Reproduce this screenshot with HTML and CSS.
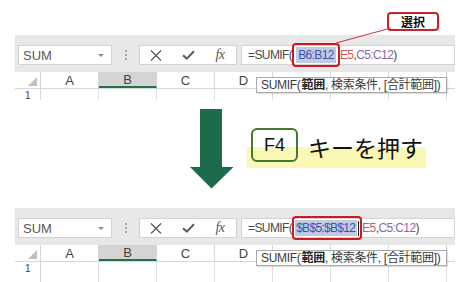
FILE: index.html
```html
<!DOCTYPE html>
<html lang="ja">
<head>
<meta charset="utf-8">
<link rel="stylesheet" href="styles.css">
</head>
<body>
<div class="page">
  <section class="sheet sheet-top">
    <div class="toolbar">
      <div class="namebox"><span>SUM</span><i class="dd"></i></div>
      <div class="grip"><i></i><i></i><i></i></div>
      <div class="btns">
        <span class="btn"><svg width="12" height="11" viewBox="0 0 12 11"><path d="M1 0.5L11 10.5M11 0.5L1 10.5" stroke="#5a5a5a" stroke-width="1.3" fill="none"/></svg></span>
        <span class="btn"><svg width="13" height="10" viewBox="0 0 13 10"><path d="M1 5.2L4.8 8.6L12 1.2" stroke="#5a5a5a" stroke-width="2" fill="none"/></svg></span>
        <span class="btn fx">fx</span>
      </div>
      <div class="formula">=SUMIF(<span class="sel"><span class="hl">B6:B12</span></span><span class="ref-e">E5</span>,<span class="ref-c">C5:C12</span>)</div>
    </div>
    <div class="headers">
      <div class="corner"><i></i></div>
      <div class="col">A</div><div class="col active">B</div><div class="col">C</div><div class="col">D</div><div class="col"></div><div class="col"></div><div class="col"></div><div class="col"></div>
    </div>
    <div class="row">
      <div class="rh">1</div><div class="cell"></div><div class="cell"></div><div class="cell"></div><div class="cell"></div><div class="cell"></div><div class="cell"></div><div class="cell"></div><div class="cell"></div>
    </div>
    <div class="tip">SUMIF(<b>範囲</b>, 検索条件, [合計範囲])</div>
  </section>

  <div class="callout">選択</div>
  <svg class="leader" width="474" height="60" viewBox="0 0 474 60"><line x1="336" y1="43" x2="391" y2="28" stroke="#c9343b" stroke-width="1"/></svg>

  <section class="step">
    <svg class="arrow" width="44" height="80" viewBox="0 0 44 80"><polygon points="10,0 32,0 32,58 43.5,58 21.5,79.5 0,58 10,58" fill="#1d6b4b"/></svg>
    <div class="keyline">
      <span class="key">F4</span>
      <span class="keytext">キーを押す</span>
    </div>
  </section>

  <section class="sheet sheet-bottom">
    <div class="toolbar">
      <div class="namebox"><span>SUM</span><i class="dd"></i></div>
      <div class="grip"><i></i><i></i><i></i></div>
      <div class="btns">
        <span class="btn"><svg width="12" height="11" viewBox="0 0 12 11"><path d="M1 0.5L11 10.5M11 0.5L1 10.5" stroke="#5a5a5a" stroke-width="1.3" fill="none"/></svg></span>
        <span class="btn"><svg width="13" height="10" viewBox="0 0 13 10"><path d="M1 5.2L4.8 8.6L12 1.2" stroke="#5a5a5a" stroke-width="2" fill="none"/></svg></span>
        <span class="btn fx">fx</span>
      </div>
      <div class="formula">=SUMIF(<span class="sel sel-abs"><span class="hl">$B$5:$B$12</span><i class="caret"></i></span><span class="ref-e">E5</span>,<span class="ref-c">C5:C12</span>)</div>
    </div>
    <div class="headers">
      <div class="corner"><i></i></div>
      <div class="col">A</div><div class="col active">B</div><div class="col">C</div><div class="col">D</div><div class="col"></div><div class="col"></div><div class="col"></div><div class="col"></div>
    </div>
    <div class="row row-tall">
      <div class="rh">1</div><div class="cell"></div><div class="cell"></div><div class="cell"></div><div class="cell"></div><div class="cell"></div><div class="cell"></div><div class="cell"></div><div class="cell"></div>
    </div>
    <div class="tip">SUMIF(<b>範囲</b>, 検索条件, [合計範囲])</div>
  </section>
</div>
</body>
</html>
```

FILE: styles.css
```css
* { box-sizing: border-box; margin: 0; padding: 0; }
html, body { background: #fff; }
body {
  width: 474px;
  height: 282px;
  overflow: hidden;
  font-family: "Liberation Sans", Arial, "Noto Sans CJK JP", sans-serif;
  color: #333;
}
.page { position: relative; height: 282px; padding-top: 35px; overflow: hidden; }

.sheet { position: relative; margin-left: 15px; width: 440px; }
.sheet-top { height: 65px; }
.sheet-bottom { height: 74px; }

.toolbar {
  height: 37px;
  background: #e8e8e8;
  display: flex;
  align-items: flex-start;
  padding: 10px 0 0 3px;
}
.namebox {
  width: 94px;
  height: 20px;
  background: #fff;
  border: 1px solid #d2d2d2;
  display: flex;
  align-items: center;
  justify-content: space-between;
  padding: 0 7px 0 4px;
  font-size: 13px;
  color: #5a5a5a;
}
.dd {
  width: 0; height: 0;
  border-left: 3px solid transparent;
  border-right: 3px solid transparent;
  border-top: 3px solid #8a8a8a;
}
.grip {
  width: 27px;
  height: 20px;
  display: flex;
  flex-direction: column;
  align-items: center;
  justify-content: center;
  gap: 2px;
}
.grip i { width: 2px; height: 2px; background: #a8a8a8; }
.btns {
  width: 98px;
  height: 20px;
  background: #fff;
  border: 1px solid #d2d2d2;
  display: flex;
}
.btn { flex: 1; display: flex; align-items: center; justify-content: center; }
.fx {
  font-family: "Liberation Serif", serif;
  font-style: italic;
  font-size: 14px;
  color: #555;
  letter-spacing: -0.5px;
}
.formula {
  margin-left: 4px;
  width: 214px;
  height: 20px;
  background: #fff;
  border: 1px solid #d2d2d2;
  display: flex;
  align-items: center;
  padding-left: 6px;
  font-size: 12px;
  letter-spacing: -0.6px;
  white-space: nowrap;
  color: #4a4a4a;
}
.sel {
  height: 24px;
  display: inline-flex;
  align-items: center;
  border: 2px solid #d0191f;
  border-radius: 4px;
  padding: 0 2px;
}
.hl {
  background: #c2cadf;
  color: #3556b6;
  line-height: 16px;
  padding: 0 2px;
}
.sel-abs { padding: 0 1px; }
.sel-abs .hl { letter-spacing: -0.7px; padding: 0 2px 0 1px; }
.caret { width: 1px; height: 15px; background: #222; margin-left: 1px; }
.ref-e { color: #d0585c; }
.ref-c { color: #8a68a8; }

.headers {
  height: 17px;
  display: flex;
  background: #fff;
  overflow: hidden;
  border-bottom: 1px solid #d6d6d6;
}
.corner {
  width: 26px;
  flex: none;
  border-right: 1px solid #d6d6d6;
  display: flex;
  align-items: flex-end;
  justify-content: flex-end;
  padding: 0 3px 2px 0;
}
.corner i {
  width: 0; height: 0;
  border-left: 9px solid transparent;
  border-bottom: 9px solid #c0c0c0;
}
.col {
  width: 58px;
  flex: none;
  text-align: center;
  font-size: 13px;
  line-height: 17px;
  color: #444;
  border-right: 1px solid #d6d6d6;
}
.col.active {
  background: #d4d4d4;
  border-bottom: 2px solid #217346;
  line-height: 16px;
}
.row { height: 11px; display: flex; overflow: hidden; }
.row-tall { height: 20px; }
.rh {
  width: 26px;
  flex: none;
  border-right: 1px solid #d6d6d6;
  font-size: 10px;
  line-height: 11px;
  color: #444;
  padding: 1px 0 0 10px;
}
.cell { width: 58px; flex: none; border-right: 1px solid #e0e0e0; }

.tip {
  position: absolute;
  left: 241px;
  top: 42px;
  width: 191px;
  height: 16px;
  padding: 0 3px 0 4px;
  background: #fff;
  border: 1px solid #a8a8a8;
  box-shadow: 1px 1px 1px rgba(0,0,0,0.12);
  font-family: "Liberation Sans", "Noto Sans CJK JP", sans-serif;
  font-size: 12px;
  letter-spacing: -0.3px;
  line-height: 14px;
  color: #3a3a3a;
  white-space: nowrap;
}
.tip b { font-weight: bold; color: #222; margin-left: 1px; }

.callout {
  position: absolute;
  left: 387px;
  top: 12px;
  width: 52px;
  height: 19px;
  border: 2px solid #c8222a;
  border-radius: 4px;
  background: #fff;
  font-family: "Noto Sans CJK JP", sans-serif;
  font-weight: bold;
  font-size: 12px;
  line-height: 15px;
  text-align: center;
  color: #111;
}
.leader { position: absolute; left: 0; top: 0; }

.step {
  height: 108px;
  display: flex;
  align-items: flex-start;
  padding-left: 190px;
}
.arrow { margin-top: 9px; flex: none; }
.keyline {
  margin-top: 28px;
  margin-left: 13px;
  height: 40px;
  display: flex;
  align-items: flex-start;
  padding-left: 4px;
  padding-right: 3px;
  background: linear-gradient(to bottom, transparent 19px, #fbf7b4 19px);
}
.key {
  width: 47px;
  height: 34px;
  border: 2px solid #44792f;
  border-radius: 6px;
  display: flex;
  align-items: center;
  justify-content: center;
  font-size: 18px;
  color: #111;
}
.keytext {
  margin-left: 10px;
  font-family: "Noto Sans CJK JP", sans-serif;
  font-size: 23px;
  line-height: 38px;
  color: #111;
}
```
